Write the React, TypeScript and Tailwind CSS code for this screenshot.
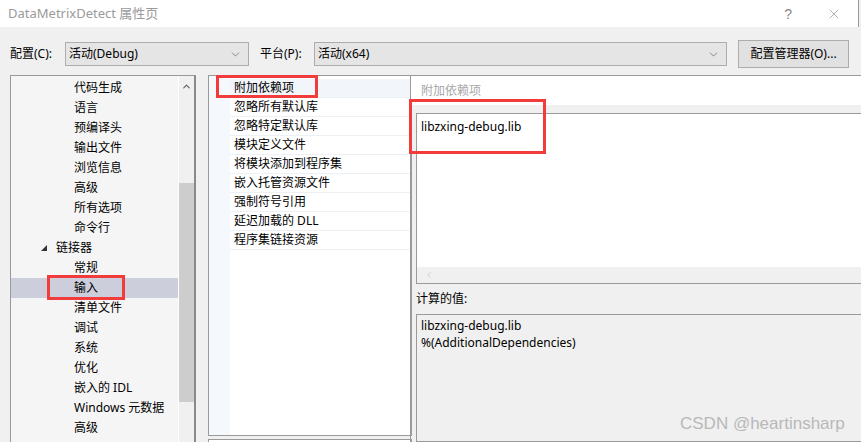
import { ChevronDown, ChevronUp, ChevronLeft, X } from "lucide-react";

const treeItems: { label: string; level: 1 | 2; expand?: boolean }[] = [
  { label: "代码生成", level: 2 },
  { label: "语言", level: 2 },
  { label: "预编译头", level: 2 },
  { label: "输出文件", level: 2 },
  { label: "浏览信息", level: 2 },
  { label: "高级", level: 2 },
  { label: "所有选项", level: 2 },
  { label: "命令行", level: 2 },
  { label: "链接器", level: 1, expand: true },
  { label: "常规", level: 2 },
  { label: "输入", level: 2 },
  { label: "清单文件", level: 2 },
  { label: "调试", level: 2 },
  { label: "系统", level: 2 },
  { label: "优化", level: 2 },
  { label: "嵌入的 IDL", level: 2 },
  { label: "Windows 元数据", level: 2 },
  { label: "高级", level: 2 },
];

const props = [
  "附加依赖项",
  "忽略所有默认库",
  "忽略特定默认库",
  "模块定义文件",
  "将模块添加到程序集",
  "嵌入托管资源文件",
  "强制符号引用",
  "延迟加载的 DLL",
  "程序集链接资源",
];

const font = "font-['Noto_Sans','Noto_Sans_CJK_SC',sans-serif]";

const Combo = ({ value, className }: { value: string; className: string }) => (
  <div
    className={`h-[24px] flex items-center justify-between bg-[#e5e5e5] border border-[#adadad] pl-[3px] pr-[6px] ${className}`}
  >
    <span className="text-[12px] leading-none text-black">{value}</span>
    <ChevronDown size={13} strokeWidth={1.2} className="text-[#555]" />
  </div>
);

const App = () => {
  return (
    <div className={`relative w-[861px] h-[442px] overflow-hidden bg-[#f0f0f0] ${font}`}>
      {/* title bar */}
      <div className="h-[27px] bg-white flex items-center justify-between pl-[8px] border-r border-[#9a9a9a] w-[859px]">
        <span className="text-[13px] text-[#9a9a9a] leading-none">DataMetrixDetect 属性页</span>
        <div className="flex items-center gap-[34px] pr-[16px] text-[#888]">
          <span className="text-[14px] leading-none font-['Liberation_Sans',sans-serif]">?</span>
          <X size={16} strokeWidth={1} />
        </div>
      </div>

      {/* config row */}
      <div className="flex items-center h-[28px] mt-[13px] pl-[10px]">
        <span className="text-[12px] w-[55px] text-black">配置(C):</span>
        <Combo value="活动(Debug)" className="w-[184px]" />
        <span className="text-[12px] ml-[11px] w-[54px] text-black">平台(P):</span>
        <Combo value="活动(x64)" className="w-[413px]" />
        <div className="ml-[11px] h-[28px] w-[111px] flex items-center justify-center bg-[#e1e1e1] border border-[#adadad] text-[12px] text-black">
          配置管理器(O)...
        </div>
      </div>

      {/* main area */}
      <div className="flex mt-[7px] h-[367px]">
        {/* tree */}
        <div className="shrink-0 ml-[10px] w-[186px] h-[370px] flex border border-[#9a9a9a] border-r-2 border-r-[#8a8a8a] bg-[#f5f5f5]">
          <div className="flex-1 pt-[2px] border-r border-white">
            {treeItems.map((item, i) => (
              <div
                key={i}
                className={`h-[20px] flex items-center text-[12px] text-black ${
                  item.label === "输入" ? "bg-[#cccedb]" : ""
                } ${item.level === 2 ? "pl-[63px]" : "pl-[30px]"}`}
              >
                {item.expand && (
                  <svg width="6" height="6" viewBox="0 0 6 6" className="mr-[9px]">
                    <polygon points="6,0 6,6 0,6" fill="#333" />
                  </svg>
                )}
                {item.label}
              </div>
            ))}
          </div>
          <div className="w-[15px] flex flex-col bg-[#f0f0f0]">
            <div className="h-[20px] flex items-center justify-center text-[#606060]">
              <ChevronUp size={11} strokeWidth={2.5} />
            </div>
            <div className="mt-[87px] h-[219px] bg-[#cdcdcd]" />
          </div>
        </div>

        {/* property list */}
        <div className="shrink-0 ml-[12px] flex flex-col">
          <div className="shrink-0 w-[204px] h-[361px] bg-white border border-[#9a9a9a] flex">
            <div className="w-[21px] bg-[#f5f8fc]" />
            <div className="flex-1 pt-[3px]">
              {props.map((p, i) => (
                <div
                  key={p}
                  className={`h-[19px] flex items-center pl-[4px] text-[12px] text-black border-b border-[#edf0f5] ${
                    i === 0 ? "bg-[#f2f5fa]" : ""
                  }`}
                >
                  {p}
                </div>
              ))}
            </div>
          </div>
          <div className="shrink-0 mt-[3px] w-[204px] h-[10px] border border-[#9a9a9a] bg-white" />
        </div>

        {/* value editor */}
        <div className="-ml-[2px] flex-1 flex flex-col border-l border-t border-[#9a9a9a]">
          <div className="h-[29px] bg-white flex items-center pl-[10px] text-[12px] text-[#a8a8a8]">附加依赖项</div>
          <div className="flex-1 pl-[5px] pt-[8px] flex flex-col">
            <div className="h-[171px] bg-white border border-[#9a9a9a] border-r-0 flex flex-col">
              <div className="flex-1 pl-[4px] pt-[4px] text-[12px] text-black">libzxing-debug.lib</div>
              <div className="h-[16px] bg-[#f0f0f0] flex items-center pl-[7px] text-[#c4c4c4]">
                <ChevronLeft size={10} strokeWidth={2} />
              </div>
            </div>
            <div className="h-[30px] flex items-center text-[12px] text-black">计算的值:</div>
            <div className="flex-1 border border-[#9a9a9a] border-r-0 bg-[#f0f0f0] pl-[4px] pt-[2px] text-[12px] text-black leading-[17px]">
              <div>libzxing-debug.lib</div>
              <div>%(AdditionalDependencies)</div>
            </div>
          </div>
        </div>
      </div>

      {/* annotation boxes */}
      <div className="absolute left-[47px] top-[275px] w-[78px] h-[25px] border-[3px] border-[#f23c3c]" />
      <div className="absolute left-[216px] top-[75px] w-[102px] h-[23px] border-[3px] border-[#f23c3c]" />
      <div className="absolute left-[409px] top-[99px] w-[137px] h-[55px] border-[3px] border-[#f23c3c]" />

      {/* watermark */}
      <div className="absolute left-[680px] top-[413px] text-[17px] leading-[22px] text-[#b8b8b8] font-['Liberation_Sans',sans-serif]">
        CSDN @heartinsharp
      </div>
    </div>
  );
};

export default App;
